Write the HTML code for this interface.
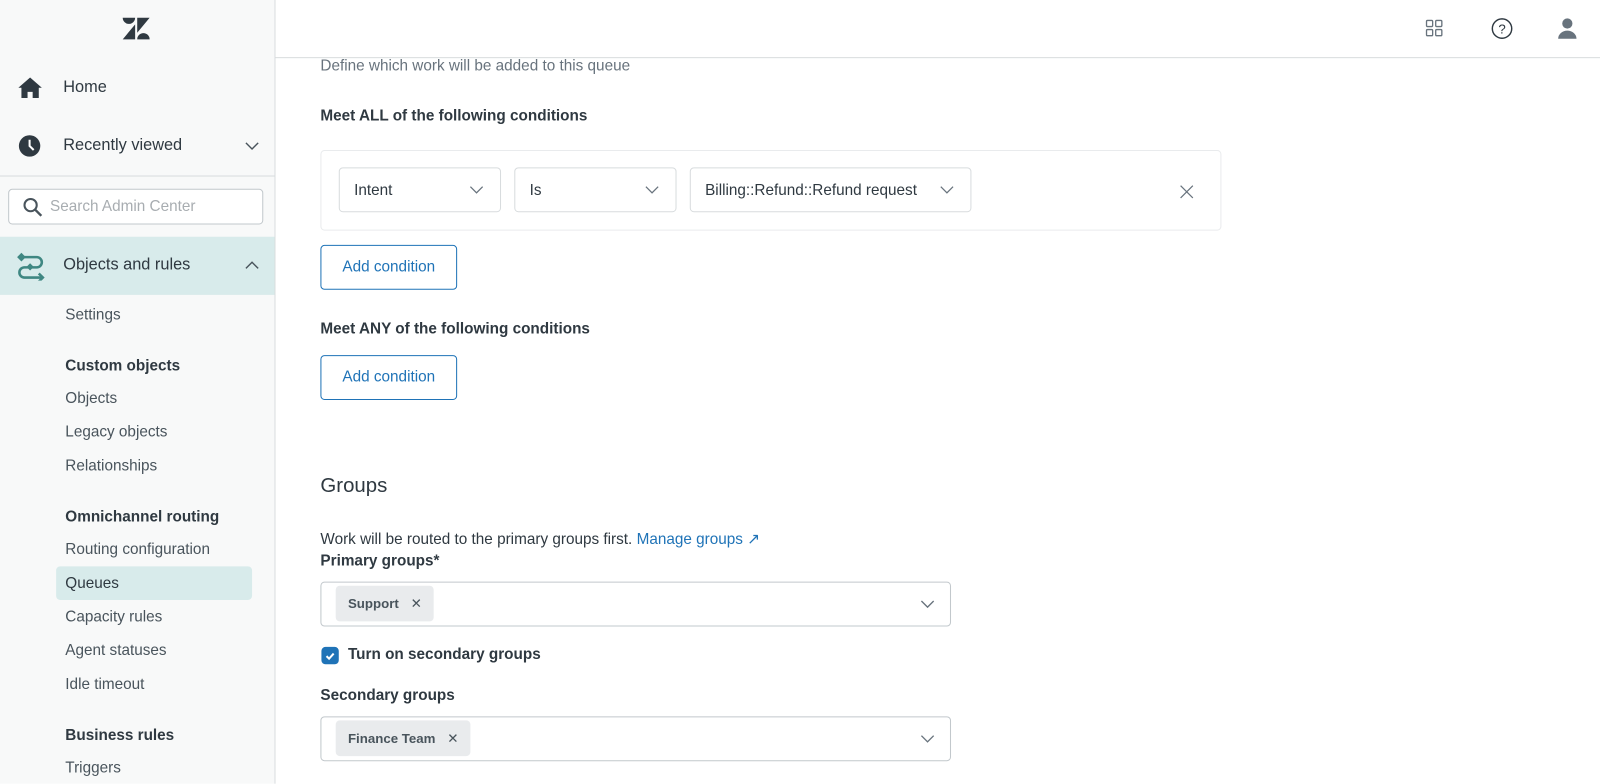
<!DOCTYPE html>
<html><head><style>
*{box-sizing:border-box;margin:0;padding:0}
body{width:1600px;height:783px;overflow:hidden;font-family:"Liberation Sans",sans-serif;color:#2f3941;background:#fff;position:relative}
#w{position:absolute;left:0;top:0;width:1568px;height:768px;transform:scale(1.0204);transform-origin:0 0}
.a{position:absolute;white-space:nowrap}
#side{position:absolute;left:0;top:0;width:270px;height:768px;background:#f8f9f9;border-right:1px solid #d8dcde}
.nav{font-size:16px;color:#2f3941}
.sub{font-size:15px;color:#49545c;left:64px}
.hd{font-size:15px;font-weight:bold;color:#2f3941;left:64px}
.sel{border:1px solid #d8dcde;border-radius:4px;background:#fff;height:44px;font-size:15px;padding:13px 14px}
.btn{border:1px solid #1f73b7;border-radius:4px;color:#1f73b7;font-size:15px;width:134px;height:44px;text-align:center;line-height:42px}
.tag{background:#e9ebed;border-radius:4px;font-size:13px;font-weight:bold;color:#49545c;height:35px;line-height:35px;padding:0 12px}
</style></head><body><div id="w">
<div id="side">
<svg class="a" style="left:119px;top:17px" width="29" height="22" viewBox="0 0 30 22"><path d="M13.9 6.7v15.2H1.3z M13.9 0a6.3 6.3 0 0 1-12.6 0z M16 21.9a6.3 6.3 0 0 1 12.6 0z M16 15.2V0h12.6z" fill="#2f3941"/></svg>
<svg class="a" style="left:17px;top:75px" width="25" height="22" viewBox="0 0 25 22"><path d="M12.5 1L1 11h3v10h6v-6h5v6h6V11h3z" fill="#2f3941"/></svg>
<div class="a nav" style="left:62px;top:77px">Home</div>
<svg class="a" style="left:18px;top:132px" width="22" height="22"><circle cx="11" cy="11" r="10.5" fill="#2f3941"/><path d="M11 5v6l4 4" stroke="#fff" stroke-width="2" fill="none"/></svg>
<div class="a nav" style="left:62px;top:134px">Recently viewed</div>
<svg class="a" style="left:240px;top:138px" width="14" height="10"><path d="M1 2l6 6 6-6" stroke="#49545c" stroke-width="1.4" fill="none"/></svg>
<div class="a" style="left:0;top:172px;width:270px;border-top:1px solid #d8dcde"></div>
<div class="a" style="left:8px;top:185px;width:250px;height:35px;background:#fff;border:1px solid #c2c8cc;border-radius:4px"></div>
<svg class="a" style="left:22px;top:193px" width="20" height="20"><circle cx="8" cy="8" r="6" stroke="#49545c" stroke-width="2" fill="none"/><path d="M12.5 12.5l6 6" stroke="#49545c" stroke-width="2.4"/></svg>
<div class="a" style="left:49px;top:194px;font-size:15px;color:#a8adb1">Search Admin Center</div>
<div class="a" style="left:0;top:232px;width:269px;height:57px;background:#d8ebeb"></div>
<svg class="a" style="left:16px;top:247px" width="28" height="28" viewBox="0 0 28 28"><path d="M4 5h16a5 5 0 0 1 0 10H8a5 5 0 0 0 0 10h18" stroke="#3f8782" stroke-width="2.5" fill="none"/><path d="M22 21l4 4-4 4" stroke="#3f8782" stroke-width="2.5" fill="none"/><rect x="2" y="2" width="6" height="6" transform="rotate(45 5 5)" fill="#3f8782"/><rect x="11" y="12" width="5" height="5" transform="rotate(45 13.5 14.5)" fill="#3f8782"/></svg>
<div class="a nav" style="left:62px;top:251px">Objects and rules</div>
<svg class="a" style="left:240px;top:255px" width="14" height="10"><path d="M1 8l6-6 6 6" stroke="#49545c" stroke-width="1.4" fill="none"/></svg>
<div class="a sub" style="top:300px">Settings</div>
<div class="a hd" style="top:350px">Custom objects</div>
<div class="a sub" style="top:382px">Objects</div>
<div class="a sub" style="top:415px">Legacy objects</div>
<div class="a sub" style="top:448px">Relationships</div>
<div class="a hd" style="top:498px">Omnichannel routing</div>
<div class="a sub" style="top:530px">Routing configuration</div>
<div class="a" style="left:55px;top:555px;width:192px;height:33px;background:#d8ebeb;border-radius:4px"></div>
<div class="a sub" style="top:563px;color:#2f3941">Queues</div>
<div class="a sub" style="top:596px">Capacity rules</div>
<div class="a sub" style="top:629px">Agent statuses</div>
<div class="a sub" style="top:662px">Idle timeout</div>
<div class="a hd" style="top:712px">Business rules</div>
<div class="a sub" style="top:744px">Triggers</div>
</div>
<div class="a" style="left:270px;top:56px;width:1330px;border-top:1px solid #d8dcde"></div>
<svg class="a" style="left:1397px;top:19px" width="18" height="18"><g fill="none" stroke="#68737d" stroke-width="1.3"><rect x="1" y="1" width="6" height="6" rx="1"/><rect x="10" y="1" width="6" height="6" rx="1"/><rect x="1" y="10" width="6" height="6" rx="1"/><rect x="10" y="10" width="6" height="6" rx="1"/></g></svg>
<svg class="a" style="left:1461px;top:17px" width="22" height="22"><circle cx="11" cy="11" r="9.5" stroke="#2f3941" stroke-width="1.4" fill="none"/><text x="11" y="16" font-size="13" text-anchor="middle" fill="#2f3941" font-family="Liberation Sans">?</text></svg>
<svg class="a" style="left:1526px;top:17px" width="20" height="22"><circle cx="10" cy="6" r="5" fill="#68737d"/><path d="M1 21a9 8 0 0 1 18 0z" fill="#68737d"/></svg>
<div class="a" style="left:314px;top:56px;font-size:15px;color:#68737d">Define which work will be added to this queue</div>
<div class="a" style="left:314px;top:105px;font-size:15px;font-weight:bold">Meet ALL of the following conditions</div>
<div class="a" style="left:314px;top:147px;width:883px;height:79px;border:1px solid #e9ebed;border-radius:4px"></div>
<div class="a sel" style="left:332px;top:164px;width:159px">Intent</div>
<div class="a sel" style="left:504px;top:164px;width:159px">Is</div>
<div class="a sel" style="left:676px;top:164px;width:276px">Billing::Refund::Refund request</div>
<svg class="a" style="left:460px;top:181px" width="14" height="10"><path d="M1 2l6 6 6-6" stroke="#68737d" stroke-width="1.2" fill="none"/></svg>
<svg class="a" style="left:632px;top:181px" width="14" height="10"><path d="M1 2l6 6 6-6" stroke="#68737d" stroke-width="1.2" fill="none"/></svg>
<svg class="a" style="left:921px;top:181px" width="14" height="10"><path d="M1 2l6 6 6-6" stroke="#68737d" stroke-width="1.2" fill="none"/></svg>
<svg class="a" style="left:1156px;top:181px" width="14" height="14"><path d="M1 1l12 12M13 1L1 13" stroke="#68737d" stroke-width="1.2"/></svg>
<div class="a btn" style="left:314px;top:240px">Add condition</div>
<div class="a" style="left:314px;top:314px;font-size:15px;font-weight:bold">Meet ANY of the following conditions</div>
<div class="a btn" style="left:314px;top:348px">Add condition</div>
<div class="a" style="left:314px;top:465px;font-size:20px">Groups</div>
<div class="a" style="left:314px;top:519px;font-size:15px">Work will be routed to the primary groups first. <span style="color:#1f73b7">Manage groups ↗</span></div>
<div class="a" style="left:314px;top:541px;font-size:15px;font-weight:bold">Primary groups*</div>
<div class="a" style="left:314px;top:570px;width:618px;height:44px;border:1px solid #c2c8cc;border-radius:4px"></div>
<div class="a tag" style="left:329px;top:574px">Support <span style="font-weight:normal;margin-left:8px">✕</span></div>
<svg class="a" style="left:902px;top:587px" width="14" height="10"><path d="M1 2l6 6 6-6" stroke="#68737d" stroke-width="1.3" fill="none"/></svg>
<div class="a" style="left:315px;top:634px;width:17px;height:17px;background:#1f73b7;border-radius:4px"></div>
<svg class="a" style="left:315px;top:634px" width="17" height="17"><path d="M5 9l2.5 2.5L12 6.5" stroke="#fff" stroke-width="2" fill="none"/></svg>
<div class="a" style="left:341px;top:633px;font-size:15px;font-weight:bold">Turn on secondary groups</div>
<div class="a" style="left:314px;top:673px;font-size:15px;font-weight:bold">Secondary groups</div>
<div class="a" style="left:314px;top:702px;width:618px;height:44px;border:1px solid #c2c8cc;border-radius:4px"></div>
<div class="a tag" style="left:329px;top:706px">Finance Team <span style="font-weight:normal;margin-left:8px">✕</span></div>
<svg class="a" style="left:902px;top:719px" width="14" height="10"><path d="M1 2l6 6 6-6" stroke="#68737d" stroke-width="1.3" fill="none"/></svg>
</div></body></html>
